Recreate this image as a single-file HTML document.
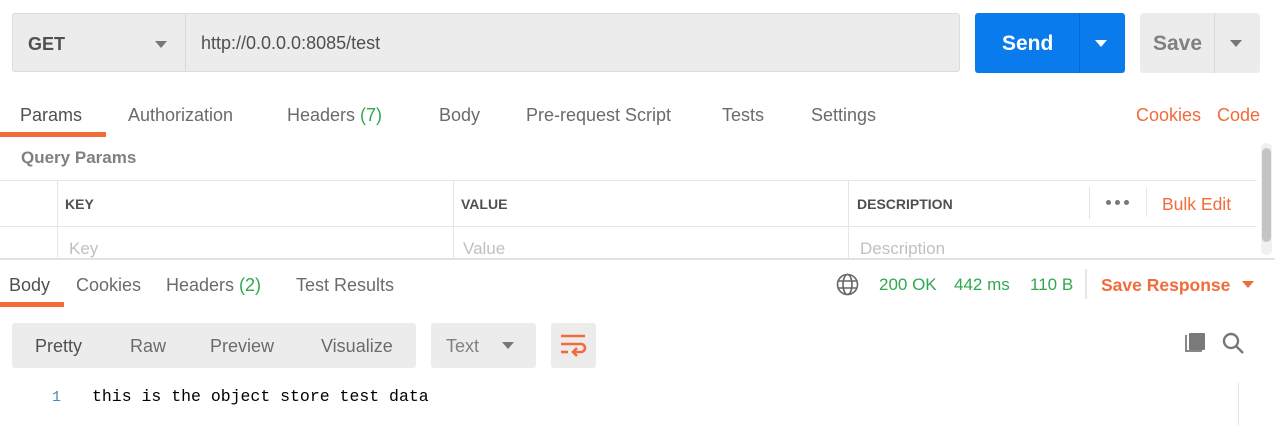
<!DOCTYPE html>
<html><head><style>
*{margin:0;padding:0;box-sizing:border-box}
body{width:1275px;height:425px;background:#fff;font-family:"Liberation Sans",sans-serif;position:relative;overflow:hidden;color:#505050}
.a{position:absolute;white-space:nowrap}
.t{font-size:18px;color:#6b6b6b}
.or{color:#f26b3a}
.gr{color:#2fa84f}
.caret{position:absolute;width:0;height:0;border-left:6px solid transparent;border-right:6px solid transparent;border-top:7px solid #777}
.dot{position:absolute;width:5px;height:5px;border-radius:50%;background:#777}
</style></head><body>
<div class="a" style="left:12px;top:13px;width:948px;height:59px;background:#ececec;border:1px solid #dcdcdc;border-radius:3px"></div>
<div class="a" style="left:185px;top:14px;width:1px;height:57px;background:#d8d8d8"></div>
<div class="a" style="left:28px;top:34px;font-size:18px;font-weight:bold;color:#505050">GET</div>
<div class="caret" style="left:155px;top:41px"></div>
<div class="a" style="left:201px;top:33px;font-size:18px;color:#505050">http://0.0.0.0:8085/test</div>
<div class="a" style="left:975px;top:13px;width:150px;height:60px;background:#097bed;border-radius:3px"></div>
<div class="a" style="left:1079px;top:13px;width:1px;height:60px;background:#0667c8"></div>
<div class="a" style="left:1002px;top:32px;font-size:21px;font-weight:bold;color:#fff">Send</div>
<div class="caret" style="left:1095px;top:40px;border-top-color:#fff"></div>
<div class="a" style="left:1140px;top:13px;width:120px;height:60px;background:#ececec;border-radius:3px"></div>
<div class="a" style="left:1214px;top:13px;width:1px;height:60px;background:#d8d8d8"></div>
<div class="a" style="left:1153px;top:32px;font-size:21px;font-weight:bold;color:#808080">Save</div>
<div class="caret" style="left:1230px;top:40px"></div>
<div class="a t" style="left:20px;top:105px;color:#505050">Params</div>
<div class="a" style="left:0;top:132px;width:106px;height:5px;background:#f26b3a"></div>
<div class="a t" style="left:128px;top:105px">Authorization</div>
<div class="a t" style="left:287px;top:105px">Headers <span class="gr">(7)</span></div>
<div class="a t" style="left:439px;top:105px">Body</div>
<div class="a t" style="left:526px;top:105px">Pre-request Script</div>
<div class="a t" style="left:722px;top:105px">Tests</div>
<div class="a t" style="left:811px;top:105px">Settings</div>
<div class="a t or" style="left:1136px;top:105px">Cookies</div>
<div class="a t or" style="left:1217px;top:105px">Code</div>
<div class="a" style="left:21px;top:148px;font-size:17px;font-weight:bold;color:#808080">Query Params</div>
<div class="a" style="left:0;top:180px;width:1257px;height:1px;background:#e6e6e6"></div>
<div class="a" style="left:0;top:226px;width:1257px;height:1px;background:#e6e6e6"></div>
<div class="a" style="left:57px;top:180px;width:1px;height:78px;background:#e6e6e6"></div>
<div class="a" style="left:453px;top:180px;width:1px;height:78px;background:#e6e6e6"></div>
<div class="a" style="left:848px;top:180px;width:1px;height:78px;background:#e6e6e6"></div>
<div class="a" style="left:1089px;top:187px;width:1px;height:32px;background:#e3e3e3"></div>
<div class="a" style="left:1146px;top:187px;width:1px;height:30px;background:#e8e8e8"></div>
<div class="a" style="left:65px;top:196px;font-size:14px;font-weight:bold;color:#505050">KEY</div>
<div class="a" style="left:461px;top:196px;font-size:14px;font-weight:bold;color:#505050">VALUE</div>
<div class="a" style="left:857px;top:196px;font-size:14px;font-weight:bold;color:#505050">DESCRIPTION</div>
<div class="dot" style="left:1106px;top:200px"></div><div class="dot" style="left:1115px;top:200px"></div><div class="dot" style="left:1124px;top:200px"></div>
<div class="a or" style="left:1162px;top:194px;font-size:17.5px">Bulk Edit</div>
<div class="a" style="left:69px;top:239px;font-size:17px;color:#c0c0c0">Key</div>
<div class="a" style="left:463px;top:239px;font-size:17px;color:#c0c0c0">Value</div>
<div class="a" style="left:860px;top:239px;font-size:17px;color:#c0c0c0">Description</div>
<div class="a" style="left:1261px;top:143px;width:11px;height:112px;background:#f0f0f0;border-radius:5px"></div>
<div class="a" style="left:1262px;top:148px;width:9px;height:94px;background:#c4c4c4;border-radius:5px"></div>
<div class="a" style="left:0;top:258px;width:1275px;height:2px;background:#e2e2e2"></div>
<div class="a t" style="left:9px;top:275px;color:#505050">Body</div>
<div class="a" style="left:0;top:302px;width:64px;height:5px;background:#f26b3a"></div>
<div class="a t" style="left:76px;top:275px">Cookies</div>
<div class="a t" style="left:166px;top:275px">Headers <span class="gr">(2)</span></div>
<div class="a t" style="left:296px;top:275px">Test Results</div>
<svg class="a" style="left:836px;top:273px" width="23" height="23" viewBox="0 0 23 23" fill="none" stroke="#666" stroke-width="1.6"><circle cx="11.5" cy="11.5" r="10"/><ellipse cx="11.5" cy="11.5" rx="4.5" ry="10"/><line x1="1.5" y1="8" x2="21.5" y2="8"/><line x1="1.5" y1="15" x2="21.5" y2="15"/></svg>
<div class="a gr" style="left:879px;top:275px;font-size:17px">200 OK</div>
<div class="a gr" style="left:954px;top:275px;font-size:17px">442 ms</div>
<div class="a gr" style="left:1030px;top:275px;font-size:17px">110 B</div>
<div class="a" style="left:1085px;top:269px;width:2px;height:30px;background:#e6e6e6"></div>
<div class="a or" style="left:1101px;top:275px;font-size:17.5px;font-weight:bold">Save Response</div>
<div class="caret" style="left:1242px;top:281px;border-top-color:#f26b3a"></div>
<div class="a" style="left:12px;top:323px;width:404px;height:45px;background:#ececec;border-radius:3px"></div>
<div class="a t" style="left:35px;top:336px;color:#505050">Pretty</div>
<div class="a t" style="left:130px;top:336px">Raw</div>
<div class="a t" style="left:210px;top:336px">Preview</div>
<div class="a t" style="left:321px;top:336px">Visualize</div>
<div class="a" style="left:431px;top:323px;width:105px;height:45px;background:#ececec;border-radius:3px"></div>
<div class="a t" style="left:446px;top:336px;color:#808080">Text</div>
<div class="caret" style="left:502px;top:342px"></div>
<div class="a" style="left:551px;top:323px;width:45px;height:45px;background:#ececec;border-radius:3px"></div>
<svg class="a" style="left:560px;top:332px" width="28" height="28" viewBox="0 0 28 28" fill="none" stroke="#f26b3a" stroke-width="2.6"><line x1="1" y1="4" x2="25" y2="4"/><path d="M1 12H21a4 4 0 0 1 0 8H14"/><path d="M17 16l-4 4 4 4"/><line x1="1" y1="20" x2="8" y2="20"/></svg>
<svg class="a" style="left:1183px;top:331px" width="24" height="24" viewBox="0 0 24 24"><path d="M2 4h2v15h15v2H2z" fill="#888"/><rect x="6" y="2" width="16" height="17" rx="1" fill="#7a7a7a"/></svg>
<svg class="a" style="left:1221px;top:331px" width="24" height="24" viewBox="0 0 24 24" fill="none" stroke="#777" stroke-width="2.4"><circle cx="10" cy="10" r="7"/><line x1="15" y1="15" x2="22" y2="22"/></svg>
<div class="a" style="left:52px;top:389px;font-size:15px;color:#4a8ab0;font-family:'Liberation Mono',monospace">1</div>
<div class="a" style="left:92px;top:387px;font-size:16.5px;color:#000;font-family:'Liberation Mono',monospace">this is the object store test data</div>
<div class="a" style="left:1238px;top:383px;width:1px;height:42px;background:#e3e3e3"></div>
</body></html>
